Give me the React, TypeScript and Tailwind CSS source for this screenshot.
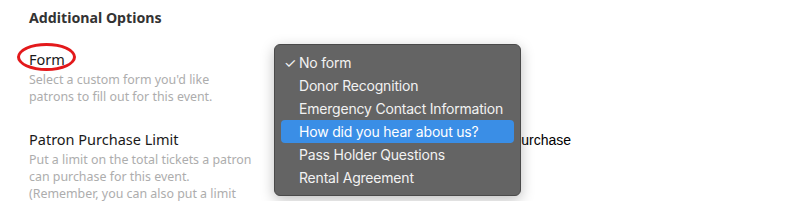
export default function App() {
  const options = [
    'No form',
    'Donor Recognition',
    'Emergency Contact Information',
    'How did you hear about us?',
    'Pass Holder Questions',
    'Rental Agreement',
  ]
  const selected = 0
  const hovered = 3

  return (
    <div className="relative w-[807px] h-[201px] overflow-hidden bg-white" style={{ fontFamily: '"Noto Sans", sans-serif' }}>
      <div className="flex">
        <div className="w-[254px] shrink-0 pl-[29px] pt-[8px]">
          <h2 className="text-[14.2px] font-bold text-[#333] leading-[20px]">Additional Options</h2>

          <div className="mt-[19px]">
            <div className="relative inline-block">
              <span className="text-[14.5px] text-[#1a1a1a] leading-[20px]">Form</span>
              <span className="absolute left-[-12px] top-[-4px] w-[59px] h-[28px] rounded-[50%] border-[3px] border-[#e3191b]" />
            </div>
            <p className="text-[12.4px] leading-[17px] text-[#adadad]">
              Select a custom form you'd like patrons to fill out for this event.
            </p>
          </div>

          <div className="mt-[24px]">
            <h3 className="text-[14.5px] text-[#1a1a1a] leading-[20px]">Patron Purchase Limit</h3>
            <p className="mt-[2px] text-[12.4px] leading-[17px] text-[#adadad]">
              Put a limit on the total tickets a patron can purchase for this event. (Remember, you can also put a limit
            </p>
          </div>
        </div>

        <div className="flex-1 pt-[127px] pl-[68px]">
          <label className="text-[14px] text-black" style={{ fontFamily: '"Liberation Sans", Arial, sans-serif' }}>
            Limit the number of tickets per purchase
          </label>
        </div>
      </div>

      <div
        className="absolute left-[274px] top-[44px] w-[247px] rounded-[6px] border border-[#4a4a4a] bg-[#646464] py-[6px] px-[6px] shadow-[0_4px_14px_rgba(0,0,0,0.25)]"
        style={{ fontFamily: 'Inter, "Liberation Sans", sans-serif' }}
      >
        <ul className="flex flex-col">
          {options.map((o, i) => (
            <li
              key={o}
              className={`relative h-[23px] flex items-center pl-[18px] rounded-[4px] text-[14px] tracking-[-0.2px] ${i === hovered ? 'bg-[#3a8ee6] text-white' : 'text-[#f2f2f2]'}`}
            >
              {i === selected && <span className="absolute left-[3px] text-[14px]">✓</span>}
              {o}
            </li>
          ))}
        </ul>
      </div>
    </div>
  )
}
